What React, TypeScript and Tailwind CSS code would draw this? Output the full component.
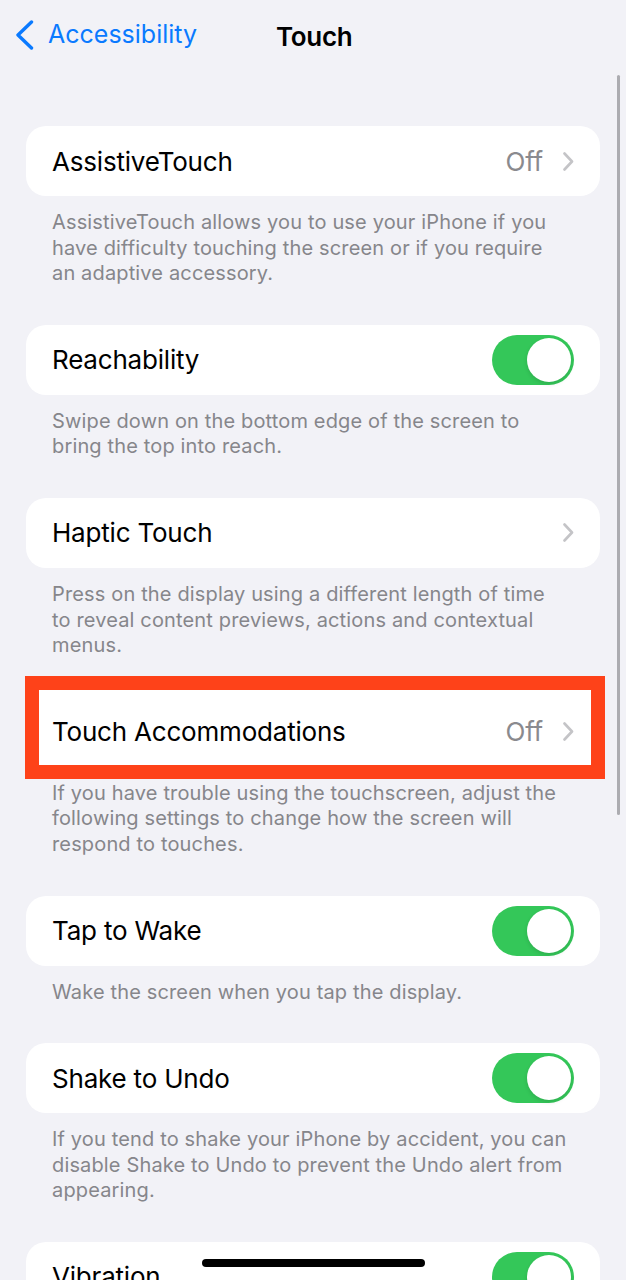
import React from "react";

type Row = {
  title: string;
  value?: string;
  chevron?: boolean;
  toggle?: boolean;
  footer?: string;
  marked?: boolean;
};

const rows: Row[] = [
  {
    title: "AssistiveTouch",
    value: "Off",
    chevron: true,
    footer:
      "AssistiveTouch allows you to use your iPhone if you have difficulty touching the screen or if you require an adaptive accessory.",
  },
  {
    title: "Reachability",
    toggle: true,
    footer: "Swipe down on the bottom edge of the screen to bring the top into reach.",
  },
  {
    title: "Haptic Touch",
    chevron: true,
    footer:
      "Press on the display using a different length of time to reveal content previews, actions and contextual menus.",
  },
  {
    title: "Touch Accommodations",
    value: "Off",
    chevron: true,
    marked: true,
    footer:
      "If you have trouble using the touchscreen, adjust the following settings to change how the screen will respond to touches.",
  },
  {
    title: "Tap to Wake",
    toggle: true,
    footer: "Wake the screen when you tap the display.",
  },
  {
    title: "Shake to Undo",
    toggle: true,
    footer:
      "If you tend to shake your iPhone by accident, you can disable Shake to Undo to prevent the Undo alert from appearing.",
  },
  { title: "Vibration", toggle: true },
];

function Toggle() {
  return (
    <div className="w-[82px] h-[50px] rounded-full bg-[#34c759] p-[3px] flex justify-end">
      <div className="w-[44px] h-[44px] rounded-full bg-white shadow-[0_2px_4px_rgba(0,0,0,0.12)]" />
    </div>
  );
}

function Chevron() {
  return (
    <svg width="11" height="19" viewBox="0 0 11 19" fill="none">
      <path
        d="M1.5 1.5 L9 9.5 L1.5 17.5"
        stroke="#c4c4c7"
        strokeWidth="2.6"
        strokeLinecap="round"
        strokeLinejoin="round"
      />
    </svg>
  );
}

function Section({ row }: { row: Row }) {
  return (
    <div className="mb-[38px]">
      <div className="relative h-[70px] rounded-[20px] bg-white">
        {/* red annotation frame */}
        {row.marked && (
          <div className="absolute -top-[21px] -bottom-[12px] -left-[1px] -right-[5px] border-[14px] border-[#fe4219] bg-white" />
        )}
        <div className="relative h-full flex items-center px-[26px]">
          <span className="flex-1 text-[26px] text-black tracking-[-0.2px]">{row.title}</span>
          {row.value && (
            <span className="text-[26px] text-[#8a8a8e] mr-[20px] tracking-[-0.2px]">{row.value}</span>
          )}
          {row.chevron && <Chevron />}
          {row.toggle && <Toggle />}
        </div>
      </div>
      {row.footer && (
        <p className="pl-[26px] pr-[33px] pt-[14px] text-[20px] leading-[25.6px] tracking-[0.15px] text-[#86868b]">
          {row.footer}
        </p>
      )}
    </div>
  );
}

export default function App() {
  return (
    <div className="relative h-[1280px] w-[626px] overflow-hidden bg-[#f2f2f7] font-['Inter','Liberation_Sans',sans-serif]">
      {/* nav bar */}
      <div className="relative h-[70px] flex items-center">
        <div className="flex items-center pl-[15px] text-[#0a7aff]">
          <svg width="19" height="30" viewBox="0 0 19 30" fill="none">
            <path
              d="M16.5 2 L3 15 L16.5 28"
              stroke="#0a7aff"
              strokeWidth="3.4"
              strokeLinecap="round"
              strokeLinejoin="round"
            />
          </svg>
          <span className="ml-[14px] text-[25px]">Accessibility</span>
        </div>
        <span className="absolute left-[276px] top-[17px] text-[26px] font-semibold text-black tracking-[-0.3px]">
          Touch
        </span>
      </div>

      <div className="px-[26px] pt-[56px]">
        {rows.map((row) => (
          <Section key={row.title} row={row} />
        ))}
      </div>

      {/* scroll indicator */}
      <div className="absolute left-[617px] top-[75px] h-[740px] w-[3px] rounded-full bg-[#acacb1]" />

      {/* home indicator */}
      <div className="absolute left-[202px] top-[1259px] h-[8px] w-[223px] rounded-full bg-black" />
    </div>
  );
}
